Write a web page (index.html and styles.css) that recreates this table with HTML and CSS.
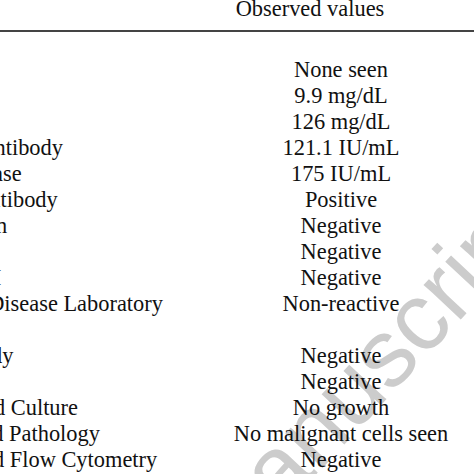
FILE: index.html
```html
<!DOCTYPE html>
<html>
<head>
<meta charset="utf-8">
<link rel="stylesheet" href="styles.css">
</head>
<body>
<div class="watermark">manuscript</div>
<div class="table">
  <div class="head">
    <div class="cell label"></div>
    <div class="cell value head-value">Observed values</div>
  </div>
  <div class="body">
    <div class="cell label"></div><div class="cell value">None seen</div>
    <div class="cell label"></div><div class="cell value">9.9 mg/dL</div>
    <div class="cell label"></div><div class="cell value">126 mg/dL</div>
    <div class="cell label"><span class="frag in-5">ntibody</span></div><div class="cell value">121.1 IU/mL</div>
    <div class="cell label"><span class="frag in-7">ase</span></div><div class="cell value">175 IU/mL</div>
    <div class="cell label"><span class="frag in-11">ntibody</span></div><div class="cell value">Positive</div>
    <div class="cell label"><span class="frag in-4">n</span></div><div class="cell value">Negative</div>
    <div class="cell label"></div><div class="cell value">Negative</div>
    <div class="cell label"><span class="frag in-6">I</span></div><div class="cell value">Negative</div>
    <div class="cell label"><span class="frag in-12">Disease Laboratory</span></div><div class="cell value">Non-reactive</div>
    <div class="cell label"></div><div class="cell value"></div>
    <div class="cell label"><span class="frag in-9">dy</span></div><div class="cell value">Negative</div>
    <div class="cell label"></div><div class="cell value">Negative</div>
    <div class="cell label"><span class="frag in-6">d Culture</span></div><div class="cell value">No growth</div>
    <div class="cell label"><span class="frag in-8">d Pathology</span></div><div class="cell value">No malignant cells seen</div>
    <div class="cell label"><span class="frag in-7">d Flow Cytometry</span></div><div class="cell value">Negative</div>
  </div>
</div>
</body>
</html>
```
FILE: styles.css
```css
html, body {
  margin: 0;
  padding: 0;
  background: #fff;
  overflow: hidden;
  width: 474px;
  height: 474px;
}
body {
  position: relative;
  font-family: "Liberation Serif", "Times New Roman", serif;
  font-size: 22.4px;
  line-height: 26px;
  color: #111;
}
.watermark {
  position: absolute;
  left: 363px;
  top: 376px;
  transform: translate(-50%, -50%) rotate(-47deg);
  font-family: "Liberation Sans", Arial, sans-serif;
  font-size: 96px;
  line-height: 1;
  color: #cccccc;
  white-space: nowrap;
  z-index: 0;
}
.table {
  position: relative;
  z-index: 1;
  margin-top: -4px;
}
.head, .body {
  display: grid;
  grid-template-columns: 226px 230px;
}
.head {
  padding-bottom: 7.5px;
  border-bottom: 2px solid #444;
}
.body {
  padding-top: 25px;
}
.cell {
  white-space: nowrap;
  height: 26px;
}
.value {
  text-align: center;
}
.head-value {
  padding-right: 62px;
}
.frag { display: inline-block; }
.in-4 { margin-left: -4px; }
.in-5 { margin-left: -5.5px; }
.in-6 { margin-left: -6px; }
.in-7 { margin-left: -7px; }
.in-8 { margin-left: -7.7px; }
.in-9 { margin-left: -9px; }
.in-11 { margin-left: -10.7px; }
.in-12 { margin-left: -11.8px; }
```
